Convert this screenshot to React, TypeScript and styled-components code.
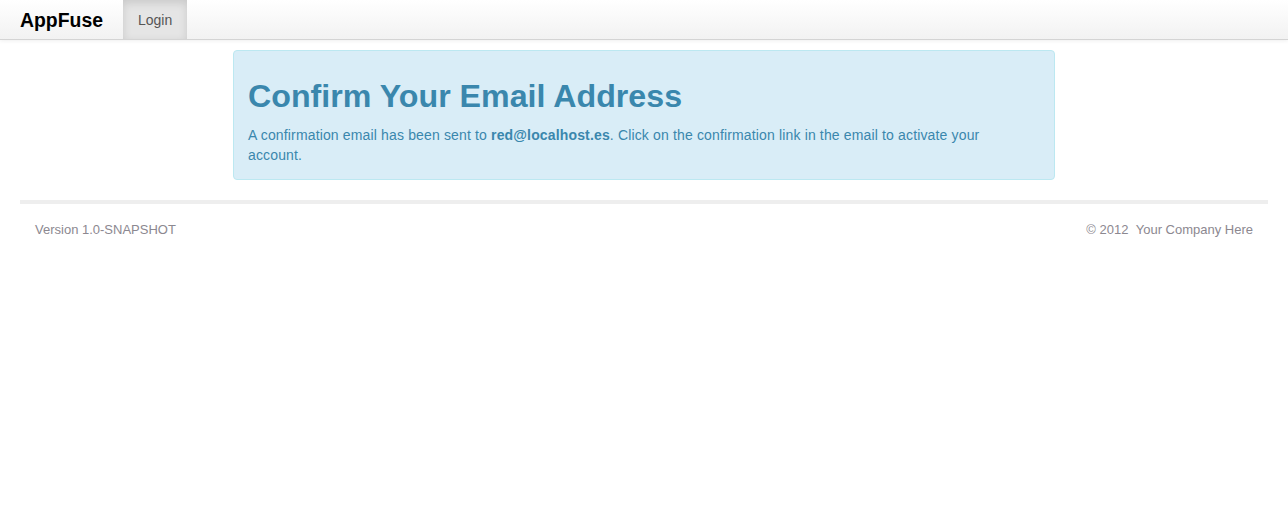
import React from 'react';
import styled, { createGlobalStyle } from 'styled-components';

const GlobalStyle = createGlobalStyle`
  html, body {
    margin: 0;
    padding: 0;
    background: #fff;
  }
  body {
    font-family: "Liberation Sans", Arial, Helvetica, sans-serif;
    font-size: 14px;
    line-height: 20px;
    color: #333;
  }
`;

const Navbar = styled.header`
  height: 39px;
  display: flex;
  align-items: stretch;
  background: linear-gradient(to bottom, #ffffff 0%, #f2f2f2 100%);
  border-bottom: 1px solid #d4d4d4;
  box-shadow: 0 1px 4px rgba(0, 0, 0, 0.065);
`;

const Brand = styled.a`
  display: flex;
  align-items: center;
  padding: 0 20px;
  font-size: 19.4px;
  font-weight: 700;
  color: #000;
  text-decoration: none;
`;

const NavItem = styled.a<{ $active?: boolean }>`
  display: flex;
  align-items: center;
  padding: 0 15px;
  font-size: 14px;
  color: #555;
  text-decoration: none;
  background: ${p => (p.$active ? '#e5e5e5' : 'transparent')};
  box-shadow: ${p => (p.$active ? 'inset 0 3px 8px rgba(0, 0, 0, 0.125)' : 'none')};
`;

const Page = styled.div`
  padding: 0 20px;
`;

const Main = styled.main`
  width: 822px;
  margin: 10px auto 0;
`;

const Alert = styled.div`
  background: #d9edf7;
  border: 1px solid #bce8f1;
  border-radius: 4px;
  padding: 8px 40px 14px 14px;
  color: #3a87ad;
`;

const Heading = styled.h1`
  margin: 17px 0 9px;
  font-size: 32.2px;
  line-height: 40px;
  font-weight: 700;
  color: #3a87ad;
`;

const Message = styled.p`
  margin: 0;
  font-size: 14px;
  line-height: 20px;
  letter-spacing: 0.15px;
`;

const Rule = styled.hr`
  margin: 20px 0 0;
  border: 0;
  height: 4px;
  background: #eeeeee;
`;

const Footer = styled.footer`
  display: flex;
  justify-content: space-between;
  padding: 17px 15px;
  font-size: 13px;
  line-height: 18px;
  color: #8c8890;
`;

export default function App() {
  return (
    <>
      <GlobalStyle />
      <Navbar>
        <Brand href="#">AppFuse</Brand>
        <NavItem href="#" $active>Login</NavItem>
      </Navbar>
      <Page>
        <Main>
          <Alert>
            <Heading>Confirm Your Email Address</Heading>
            <Message>
              A confirmation email has been sent to <strong>red@localhost.es</strong>. Click on the
              confirmation link in the email to activate your account.
            </Message>
          </Alert>
        </Main>
        <Rule />
        <Footer>
          <span>Version 1.0-SNAPSHOT</span>
          <span>&copy; 2012 &nbsp;Your Company Here</span>
        </Footer>
      </Page>
    </>
  );
}
